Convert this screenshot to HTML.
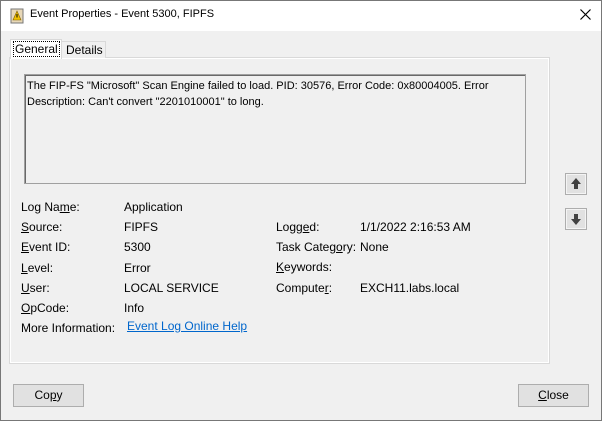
<!DOCTYPE html><html><head><style>
body{margin:0;width:602px;height:421px;background:#f0f0f0;font-family:"Liberation Sans",sans-serif;font-size:12px;color:#000;position:relative;overflow:hidden}
.a{position:absolute;white-space:nowrap}
.frame{position:absolute;left:0;top:0;width:600px;height:419px;border:1px solid #777}
.title{position:absolute;left:1px;top:1px;width:600px;height:30px;background:#fff}
.panel{position:absolute;left:9px;top:57px;width:539px;height:305px;border:1px solid #d9d9d9;background:#f0f0f0;box-shadow:inset 0 0 0 1px #fff}
.msg{position:absolute;left:24px;top:74px;width:500px;height:108px;border:1px solid #a0a0a0;box-shadow:inset 1px 1px 0 #696969;background:#f0f0f0}
.btn{position:absolute;width:69px;height:21px;border:1px solid #adadad;background:#e1e1e1;text-align:center;line-height:21px}
.ab{position:absolute;left:565px;width:20px;height:20px;border:1px solid #adadad;background:#e1e1e1;box-shadow:inset 0 0 0 1px #f4f4f4}
u{text-decoration:underline}
</style></head><body>
<div class="frame"></div>
<div class="title"></div>
<svg class="a" style="left:10px;top:8px" width="14" height="16"><rect x="1" y="1" width="12" height="14" fill="#e8d8b8" stroke="#777"/><path d="M7 3 L11 12 L3 12 Z" fill="#f0c000" stroke="#806000" stroke-width=".6"/><rect x="6.5" y="6" width="1" height="3.5" fill="#000"/></svg>
<div class="a" style="left:30px;top:8px;font-size:11px">Event Properties - Event 5300, FIPFS</div>
<svg class="a" style="left:580px;top:9px" width="11" height="11"><path d="M0.5 0.5L10.5 10.5M10.5 0.5L0.5 10.5" stroke="#000" stroke-width="1.2"/></svg>
<div class="panel"></div>
<div class="a" style="left:10px;top:39px;width:50px;height:19px;background:#fff;border:1px solid #d9d9d9;border-bottom:none"></div>
<div class="a" style="left:14px;top:42px;outline:1px dotted #000;padding:0 1px">General</div>
<div class="a" style="left:61px;top:41px;width:43px;height:16px;border:1px solid #d9d9d9;border-bottom:none;background:#f0f0f0"></div>
<div class="a" style="left:66px;top:43px">Details</div>
<div class="msg"></div>
<div class="a" style="left:27px;top:78px;line-height:16px;font-size:11px">The FIP-FS "Microsoft" Scan Engine failed to load. PID: 30576, Error Code: 0x80004005. Error<br>Description: Can't convert "2201010001" to long.</div>
<div class="ab" style="top:173px"><svg width="20" height="20"><path d="M10 4 L15 10 L12 10 L12 15 L8 15 L8 10 L5 10Z" fill="#404040"/></svg></div>
<div class="ab" style="top:208px"><svg width="20" height="20"><path d="M10 16 L15 10 L12 10 L12 5 L8 5 L8 10 L5 10Z" fill="#404040"/></svg></div>
<div class="a" style="left:21px;top:197px;line-height:20.2px">Log Na<u>m</u>e:<br><u>S</u>ource:<br><u>E</u>vent ID:<br><u>L</u>evel:<br><u>U</u>ser:<br><u>O</u>pCode:<br>More Information:</div>
<div class="a" style="left:124px;top:197px;line-height:20.2px">Application<br>FIPFS<br>5300<br>Error<br>LOCAL SERVICE<br>Info</div>
<div class="a" style="left:127px;top:319px;color:#0066cc;text-decoration:underline">Event Log Online Help</div>
<div class="a" style="left:276px;top:217px;line-height:20.2px">Logg<u>e</u>d:<br>Task Categ<u>o</u>ry:<br><u>K</u>eywords:<br>Compute<u>r</u>:</div>
<div class="a" style="left:360px;top:217px;line-height:20.2px">1/1/2022 2:16:53 AM<br>None<br><br>EXCH11.labs.local</div>
<div class="btn" style="left:13px;top:384px">Co<u>p</u>y</div>
<div class="btn" style="left:518px;top:384px"><u>C</u>lose</div>
</body></html>
